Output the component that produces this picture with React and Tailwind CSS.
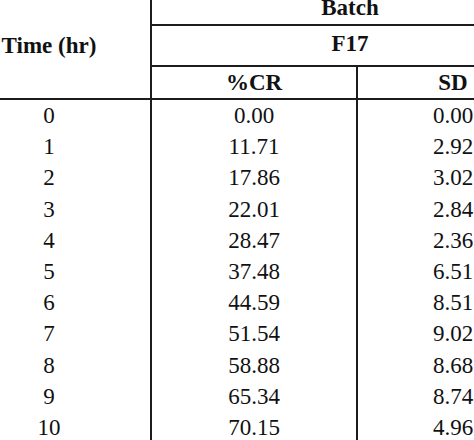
import React from 'react'

const ROWS = [
  ['0', '0.00', '0.00'],
  ['1', '11.71', '2.92'],
  ['2', '17.86', '3.02'],
  ['3', '22.01', '2.84'],
  ['4', '28.47', '2.36'],
  ['5', '37.48', '6.51'],
  ['6', '44.59', '8.51'],
  ['7', '51.54', '9.02'],
  ['8', '58.88', '8.68'],
  ['9', '65.34', '8.74'],
  ['10', '70.15', '4.96'],
]

const line = 'border-[#1c1c1c]'
const center = 'flex items-center justify-center'

export default function App() {
  return (
    <div className="h-[440px] w-[474px] overflow-hidden bg-white font-['Liberation_Serif','Times_New_Roman',serif] text-[23px] leading-none text-[#111]">
      <div className="ml-[-52px] mt-[-8px] grid w-[600px] grid-cols-[204px_206px_190px] grid-rows-[34px_41px_33px_repeat(11,31.2px)]">
        <div className={`${center} row-span-3 border-r-2 border-b-2 ${line} font-bold`}>Time (hr)</div>
        <div className={`${center} col-span-2 border-b-2 ${line} pb-[2px] font-bold`}>Batch</div>
        <div className={`${center} col-span-2 border-b-2 ${line} pb-[4px] font-bold`}>F17</div>
        <div className={`${center} border-r-2 border-b-2 ${line} font-bold`}>%CR</div>
        <div className={`${center} border-b-2 ${line} font-bold`}>SD</div>
        {ROWS.map(([t, cr, sd]) => (
          <React.Fragment key={t}>
            <div className={`${center} border-r-2 ${line}`}>{t}</div>
            <div className={`${center} border-r-2 ${line}`}>{cr}</div>
            <div className={center}>{sd}</div>
          </React.Fragment>
        ))}
      </div>
    </div>
  )
}
